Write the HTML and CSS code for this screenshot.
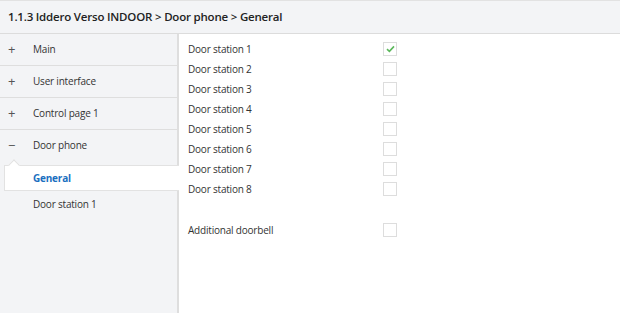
FILE: index.html
```html
<!DOCTYPE html>
<html lang="en">
<head>
    <meta charset="UTF-8">
    <title>Door phone - General</title>
    <link rel="stylesheet" href="styles.css">
</head>
<body>
    <div class="header">1.1.3 Iddero Verso INDOOR &gt; Door phone &gt; General</div>
    <div class="page">
        <div class="sidebar">
            <div class="group"><span class="sign">+</span>Main</div>
            <div class="group"><span class="sign">+</span>User interface</div>
            <div class="group"><span class="sign">+</span>Control page 1</div>
            <div class="group open"><span class="sign">&minus;</span>Door phone</div>
            <div class="sub active">General</div>
            <div class="sub">Door station 1</div>
        </div>
        <div class="content">
            <div class="row"><span>Door station 1</span><span class="check on">
                <svg width="9" height="8" viewBox="0 0 9 8"><path d="M1 4.2 L3.4 6.4 L8 1.4" fill="none" stroke="#5cb85c" stroke-width="1.6"/></svg>
            </span></div>
            <div class="row"><span>Door station 2</span><span class="check"></span></div>
            <div class="row"><span>Door station 3</span><span class="check"></span></div>
            <div class="row"><span>Door station 4</span><span class="check"></span></div>
            <div class="row"><span>Door station 5</span><span class="check"></span></div>
            <div class="row"><span>Door station 6</span><span class="check"></span></div>
            <div class="row"><span>Door station 7</span><span class="check"></span></div>
            <div class="row"><span>Door station 8</span><span class="check"></span></div>
            <div class="row gap"><span>Additional doorbell</span><span class="check"></span></div>
        </div>
    </div>
</body>
</html>
```

FILE: styles.css
```css
body {
    margin: 0;
    font-family: "Open Sans", "Noto Sans", sans-serif;
    color: #333;
    background-color: #ffffff;
    height: 313px;
    overflow: hidden;
}
.header {
    height: 32px;
    line-height: 32px;
    border-top: 1px solid #e2e2e2;
    border-bottom: 1px solid #dcdcdc;
    background-color: #f3f4f6;
    padding-left: 8px;
    font-size: 11.5px;
    font-weight: 600;
    letter-spacing: -0.2px;
    color: #222;
}
.page {
    display: flex;
    height: 279px;
}
.sidebar {
    width: 177px;
    background-color: #f3f4f6;
    border-right: 2px solid #dedede;
    font-size: 10px;
    letter-spacing: -0.2px;
}
.group {
    height: 31px;
    line-height: 31px;
    border-bottom: 1px solid #dedede;
    display: flex;
}
.group.open {
    border-bottom: none;
}
.sign {
    width: 33px;
    padding-left: 8px;
    box-sizing: border-box;
    font-size: 13px;
    color: #555;
}
.sub {
    height: 26px;
    line-height: 26px;
    padding-left: 33px;
}
.sub.active {
    position: relative;
    height: 24px;
    line-height: 24px;
    margin: 4px -2px 0 4px;
    padding-left: 28px;
    background-color: #ffffff;
    border: 1px solid #e2e2e2;
    border-right: none;
    color: #1a6fc0;
    font-weight: 700;
}
.sub.active::before {
    content: "";
    position: absolute;
    left: 5px;
    top: -5px;
    width: 7px;
    height: 7px;
    background-color: #ffffff;
    border-left: 1px solid #e2e2e2;
    border-top: 1px solid #e2e2e2;
    transform: rotate(45deg);
}
.content {
    flex: 1;
    padding: 5px 0 0 9px;
    font-size: 10px;
    letter-spacing: -0.2px;
}
.row {
    display: flex;
    align-items: center;
    height: 20px;
}
.row span:first-child {
    width: 195px;
}
.row.gap {
    margin-top: 21px;
}
.check {
    width: 12px;
    height: 12px;
    border: 1px solid #dddddd;
    display: flex;
    align-items: center;
    justify-content: center;
}
```
